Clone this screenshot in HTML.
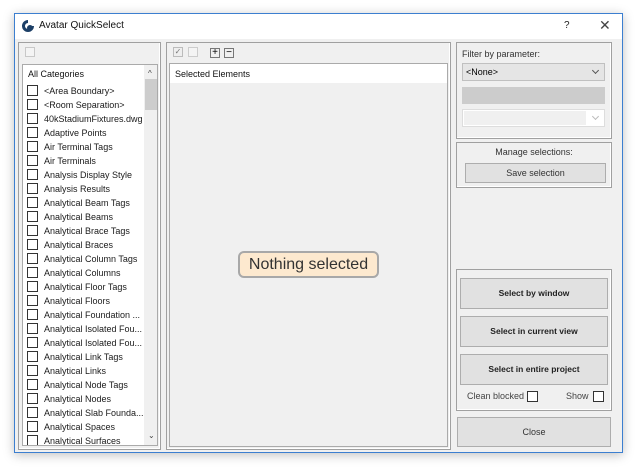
<!DOCTYPE html>
<html><head><meta charset="utf-8"><style>
*{box-sizing:border-box;margin:0;padding:0}
body{width:640px;height:472px;background:#fff;font-family:"Liberation Sans",sans-serif;font-size:9px;color:#000;position:relative;overflow:hidden}
.abs{position:absolute}
#win{left:14px;top:13px;width:609px;height:440px;border:1px solid #3c7fd0;background:#f0f0f0;box-shadow:0 2px 10px rgba(0,0,0,.25)}
#title{left:0;top:0;width:607px;height:25px;background:#fff}
.grp{border:1px solid #a0a0a0;box-shadow:inset -1px -1px 0 #fff}
.cb{position:absolute;width:11px;height:11px;border:1px solid #333;background:#fff}
.row{position:absolute;left:0;height:14px;line-height:14px;width:120px;white-space:nowrap}
.row .cb{left:4px;top:2px}
.row span{position:absolute;left:21px;top:1px;color:#1a1a1a}
.btn{position:absolute;background:#e1e1e1;border:1px solid #adadad;text-align:center;color:#111}
.sel{position:absolute;border:1px solid #c0c0c0;background:#e5e5e5}
.chev{position:absolute;right:6px;top:4px;width:5px;height:5px;border-right:1px solid #555;border-bottom:1px solid #555;transform:rotate(45deg)}
</style></head><body>
<div id="win" class="abs">
 <div id="title" class="abs">
  <svg class="abs" style="left:6px;top:5px" width="14" height="14" viewBox="0 0 14 14"><path d="M7 1a6 6 0 1 0 6 6h-3a3 3 0 1 1-3-3z" fill="#1c3f66"/><circle cx="9" cy="9" r="3" fill="#1c3f66"/></svg>
  <div class="abs" style="left:24px;top:6px;font-size:10px;color:#111">Avatar QuickSelect</div>
  <div class="abs" style="left:549px;top:6px;font-size:10px;color:#222">?</div>
  <div class="abs" style="left:584px;top:3px;font-size:14px;color:#444;font-weight:normal">✕</div>
 </div>
</div>
<div class="abs grp" style="left:18px;top:42px;width:143px;height:408px"></div>
<div class="abs" style="left:25px;top:47px;width:10px;height:10px;border:1px solid #c8c8c8;background:#f4f4f4"></div>
<div class="abs" style="left:22px;top:64px;width:136px;height:382px;background:#fff;border:1px solid #aaa;overflow:hidden">
 <div class="abs" style="left:5px;top:4px;color:#111">All Categories</div>
 <div class="abs" style="left:121px;top:0;width:14px;height:382px;background:#f0f0f0"></div>
 <div class="abs" style="left:122px;top:14px;width:12px;height:31px;background:#cdcdcd"></div>
 <div class="abs" style="left:125px;top:4px;font-size:8px;color:#444">^</div>
 <div class="abs" style="left:125px;top:366px;font-size:8px;color:#444">&#8964;</div>
 <div class="abs" style="left:0;top:18px">
  <div class="row" style="top:0"><div class="cb"></div><span>&lt;Area Boundary&gt;</span></div>
  <div class="row" style="top:14px"><div class="cb"></div><span>&lt;Room Separation&gt;</span></div>
  <div class="row" style="top:28px"><div class="cb"></div><span>40kStadiumFixtures.dwg</span></div>
  <div class="row" style="top:42px"><div class="cb"></div><span>Adaptive Points</span></div>
  <div class="row" style="top:56px"><div class="cb"></div><span>Air Terminal Tags</span></div>
  <div class="row" style="top:70px"><div class="cb"></div><span>Air Terminals</span></div>
  <div class="row" style="top:84px"><div class="cb"></div><span>Analysis Display Style</span></div>
  <div class="row" style="top:98px"><div class="cb"></div><span>Analysis Results</span></div>
  <div class="row" style="top:112px"><div class="cb"></div><span>Analytical Beam Tags</span></div>
  <div class="row" style="top:126px"><div class="cb"></div><span>Analytical Beams</span></div>
  <div class="row" style="top:140px"><div class="cb"></div><span>Analytical Brace Tags</span></div>
  <div class="row" style="top:154px"><div class="cb"></div><span>Analytical Braces</span></div>
  <div class="row" style="top:168px"><div class="cb"></div><span>Analytical Column Tags</span></div>
  <div class="row" style="top:182px"><div class="cb"></div><span>Analytical Columns</span></div>
  <div class="row" style="top:196px"><div class="cb"></div><span>Analytical Floor Tags</span></div>
  <div class="row" style="top:210px"><div class="cb"></div><span>Analytical Floors</span></div>
  <div class="row" style="top:224px"><div class="cb"></div><span>Analytical Foundation ...</span></div>
  <div class="row" style="top:238px"><div class="cb"></div><span>Analytical Isolated Fou...</span></div>
  <div class="row" style="top:252px"><div class="cb"></div><span>Analytical Isolated Fou...</span></div>
  <div class="row" style="top:266px"><div class="cb"></div><span>Analytical Link Tags</span></div>
  <div class="row" style="top:280px"><div class="cb"></div><span>Analytical Links</span></div>
  <div class="row" style="top:294px"><div class="cb"></div><span>Analytical Node Tags</span></div>
  <div class="row" style="top:308px"><div class="cb"></div><span>Analytical Nodes</span></div>
  <div class="row" style="top:322px"><div class="cb"></div><span>Analytical Slab Founda...</span></div>
  <div class="row" style="top:336px"><div class="cb"></div><span>Analytical Spaces</span></div>
  <div class="row" style="top:350px"><div class="cb"></div><span>Analytical Surfaces</span></div>
 </div>
</div>
<div class="abs grp" style="left:166px;top:42px;width:285px;height:408px"></div>
<div class="abs" style="left:173px;top:47px;width:10px;height:10px;border:1px solid #bbb;background:#eee;font-size:8px;line-height:8px;color:#777;text-align:center">✓</div>
<div class="abs" style="left:188px;top:47px;width:10px;height:10px;border:1px solid #ccc;background:#f4f4f4"></div>
<div class="abs" style="left:210px;top:48px;width:10px;height:10px;border:1px solid #777;font-size:10px;line-height:8px;text-align:center">+</div>
<div class="abs" style="left:224px;top:48px;width:10px;height:10px;border:1px solid #777;font-size:10px;line-height:7px;text-align:center">−</div>
<div class="abs" style="left:169px;top:63px;width:279px;height:384px;background:#f0f0f0;border:1px solid #aaa">
 <div class="abs" style="left:0;top:0;width:277px;height:19px;background:#fff"></div>
 <div class="abs" style="left:5px;top:5px;color:#111">Selected Elements</div>
</div>
<div class="abs" style="left:238px;top:251px;width:141px;height:27px;background:#fde9cf;border:2px solid #a8a8a8;border-radius:6px;font-size:16px;line-height:23px;text-align:center;color:#333">Nothing selected</div>
<div class="abs grp" style="left:456px;top:42px;width:156px;height:97px"></div>
<div class="abs" style="left:462px;top:49px;color:#333">Filter by parameter:</div>
<div class="sel" style="left:462px;top:63px;width:143px;height:18px"><span class="abs" style="left:3px;top:3px">&lt;None&gt;</span><div class="chev"></div></div>
<div class="sel" style="left:462px;top:87px;width:143px;height:17px;background:#ccc;border-color:#ccc"></div>
<div class="sel" style="left:462px;top:109px;width:143px;height:18px;background:#fff;border-color:#ddd"><div class="abs" style="left:1px;top:1px;width:122px;height:14px;background:#f0f0f0"></div><div class="chev" style="border-color:#bbb"></div></div>
<div class="abs grp" style="left:456px;top:142px;width:156px;height:46px"></div>
<div class="abs" style="left:456px;top:147px;width:156px;text-align:center;color:#333">Manage selections:</div>
<div class="btn" style="left:465px;top:163px;width:141px;height:20px;line-height:18px;color:#333">Save selection</div>
<div class="abs grp" style="left:456px;top:269px;width:156px;height:142px"></div>
<div class="btn" style="left:460px;top:278px;width:148px;height:31px;line-height:29px;font-weight:bold;font-size:8.5px;color:#222">Select by window</div>
<div class="btn" style="left:460px;top:316px;width:148px;height:31px;line-height:29px;font-weight:bold;font-size:8.5px;color:#222">Select in current view</div>
<div class="btn" style="left:460px;top:354px;width:148px;height:31px;line-height:29px;font-weight:bold;font-size:8.5px;color:#222">Select in entire project</div>
<div class="abs" style="left:467px;top:391px;color:#444">Clean blocked</div>
<div class="cb" style="left:527px;top:391px;width:11px;height:11px"></div>
<div class="abs" style="left:566px;top:391px;color:#444">Show</div>
<div class="cb" style="left:593px;top:391px;width:11px;height:11px"></div>
<div class="btn" style="left:457px;top:417px;width:154px;height:30px;line-height:28px;color:#333">Close</div>
</body></html>
